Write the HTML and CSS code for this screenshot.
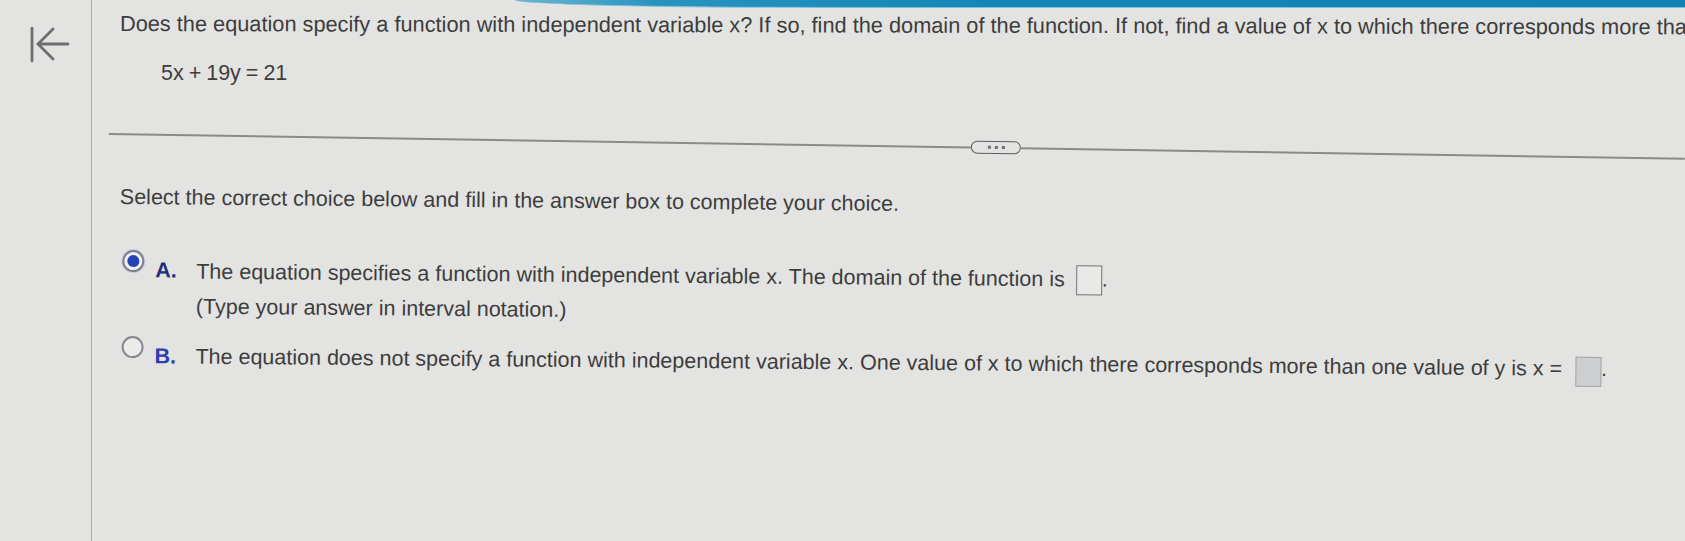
FILE: index.html
```html
<!DOCTYPE html>
<html>
<head>
<meta charset="utf-8">
<link rel="stylesheet" href="styles.css">
</head>
<body>
<div class="topbar"><div class="blue"></div></div>
<div class="page">
  <aside class="side">
    <svg class="back" width="40" height="36" viewBox="0 0 40 36">
      <line x1="2" y1="1" x2="2" y2="34" />
      <line x1="8" y1="17" x2="38" y2="17" />
      <polyline points="23,2 8,17 23,32" />
    </svg>
  </aside>
  <main class="main">
    <p class="question">Does the equation specify a function with independent variable x? If so, find the domain of the function. If not, find a value of x to which there corresponds more than one value of y.</p>
    <p class="equation">5x + 19y = 21</p>
    <div class="sep">
      <span class="line left"></span>
      <span class="more"><i></i><i></i><i></i></span>
      <span class="line right"></span>
    </div>
    <div class="choices">
      <p class="prompt">Select the correct choice below and fill in the answer box to complete your choice.</p>
      <div class="option">
        <span class="radio checked"></span>
        <span class="letter a">A.</span>
        <div class="otext">
          <div>The equation specifies a function with independent variable x. The domain of the function is <span class="box"></span>.</div>
          <div>(Type your answer in interval notation.)</div>
        </div>
      </div>
      <div class="option b">
        <span class="radio"></span>
        <span class="letter">B.</span>
        <div class="otext">
          <div>The equation does not specify a function with independent variable x. One value of x to which there corresponds more than one value of y is x = <span class="box disabled"></span>.</div>
        </div>
      </div>
    </div>
  </main>
</div>
</body>
</html>
```
FILE: styles.css
```css
html, body {
  margin: 0;
  padding: 0;
  height: 100%;
}
body {
  background: #e3e3e1;
  font-family: "Liberation Sans", Arial, sans-serif;
  color: #3d3d3d;
  overflow: hidden;
  position: relative;
}
.topbar {
  position: absolute;
  top: 0;
  left: 0;
  right: 0;
  height: 8px;
  display: flex;
  justify-content: flex-end;
  z-index: 2;
}
.blue {
  width: 1170px;
  height: 8px;
  background: linear-gradient(90deg, #6cb6d2 0%, #2893bf 12%, #1388b6 40%, #0f82b1 100%);
  border-bottom: 1px solid #7cc0dc;
  box-sizing: border-box;
  border-bottom-left-radius: 320px 8px;
}
.page {
  display: flex;
  height: 100%;
}
.side {
  width: 92px;
  flex: none;
  border-right: 1.5px solid #acacaa;
  padding: 27px 0 0 30px;
  box-sizing: border-box;
}
.back line, .back polyline {
  stroke: #6e6e6e;
  stroke-width: 2.8;
  fill: none;
  stroke-linecap: round;
  stroke-linejoin: round;
}
.main {
  flex: 1;
  min-width: 0;
  padding-left: 28px;
  overflow: hidden;
}
p {
  margin: 0;
}
.question {
  font-size: 21.75px;
  line-height: 26px;
  white-space: nowrap;
  margin-top: 11px;
  transform-origin: 0 0;
  transform: rotate(0.12deg);
}
.equation {
  font-size: 21.5px;
  line-height: 26px;
  margin-top: 23px;
  margin-left: 41px;
  word-spacing: -1px;
}
.sep {
  display: flex;
  align-items: center;
  height: 15px;
  margin-top: 40px;
  margin-left: -11px;
  transform-origin: 0 50%;
  transform: rotate(0.9deg);
}
.line {
  height: 2px;
  background: #8a8a88;
}
.line.left {
  width: 862px;
}
.line.right {
  flex: 1;
}
.more {
  width: 48px;
  height: 11px;
  border: 1.6px solid #5e5e5e;
  border-radius: 7px;
  display: flex;
  justify-content: center;
  align-items: center;
  gap: 4px;
  flex: none;
}
.more i {
  width: 3px;
  height: 3px;
  background: #6f6f6f;
}
.choices {
  transform-origin: 0 0;
  transform: rotate(0.5deg);
  margin-top: 43px;
}
.prompt {
  font-size: 21.5px;
  line-height: 26px;
}
.option {
  display: flex;
  align-items: flex-start;
  font-size: 21.5px;
  line-height: 26px;
  margin-top: 47px;
  margin-left: 3px;
}
.option.b {
  margin-top: 24px;
}
.radio {
  width: 18px;
  height: 18px;
  border: 2px solid #7c7e8c;
  border-radius: 50%;
  background: #f0f0f0;
  flex: none;
  display: flex;
  align-items: center;
  justify-content: center;
  margin-top: -7px;
}
.option.b .radio {
  background: #ebebea;
  border-color: #858690;
}
.radio.checked {
  box-shadow: 0 0 0 1px #c9cbe0;
}
.radio.checked::after {
  content: "";
  width: 12px;
  height: 12px;
  border-radius: 50%;
  background: #2443b6;
}
.letter {
  font-weight: bold;
  color: #222f7c;
  width: 41px;
  margin-left: 11px;
  flex: none;
}
.option.b .letter {
  color: #2c3eb0;
}
.otext div + div {
  margin-top: 6px;
}
.box {
  display: inline-block;
  width: 24px;
  height: 28px;
  border: 1.5px solid #747474;
  vertical-align: -9px;
  margin-left: 5px;
  background: #e9e9e7;
}
.box.disabled {
  background: #cdcecf;
  border-color: #a6a6a6;
  margin-left: 7px;
  vertical-align: -11px;
}
```
